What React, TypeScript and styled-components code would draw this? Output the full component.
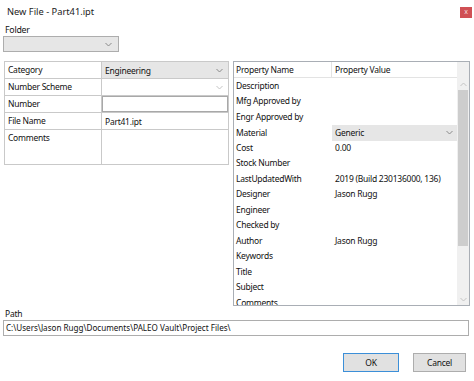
import styled, { createGlobalStyle } from 'styled-components';

const GlobalStyle = createGlobalStyle`
  html, body {
    margin:0;
    padding:0;
    background:#fff;
  }
  body {
    font-family:"Noto Sans", "Open Sans", sans-serif;
    font-size:8.5px;
    letter-spacing:-0.25px;
    color:#111;
  }
`;

const leftRows = [
  { label: 'Category', value: 'Engineering', kind: 'combo' },
  { label: 'Number Scheme', value: '', kind: 'comboOff' },
  { label: 'Number', value: '', kind: 'text' },
  { label: 'File Name', value: 'Part41.ipt', kind: 'plain' },
];

const props: { name: string; value?: string; combo?: boolean }[] = [
  { name: 'Description' },
  { name: 'Mfg Approved by' },
  { name: 'Engr Approved by' },
  { name: 'Material', value: 'Generic', combo: true },
  { name: 'Cost', value: '0.00' },
  { name: 'Stock Number' },
  { name: 'LastUpdatedWith', value: '2019 (Build 230136000, 136)' },
  { name: 'Designer', value: 'Jason Rugg' },
  { name: 'Engineer' },
  { name: 'Checked by' },
  { name: 'Author', value: 'Jason Rugg' },
  { name: 'Keywords' },
  { name: 'Title' },
  { name: 'Subject' },
  { name: 'Comments' },
];

function Chevron({ up, faint }: { up?: boolean; faint?: boolean }) {
  return (
    <svg width="7" height="5" viewBox="0 0 7 5">
      <path
        d={up ? 'M0.5 4 L3.5 1 L6.5 4' : 'M0.5 1 L3.5 4 L6.5 1'}
        fill="none"
        stroke={faint ? '#c4c4c4' : '#8a8a8a'}
        strokeWidth="1"
      />
    </svg>
  );
}

export default function App() {
  return (
    <>
      <GlobalStyle />
      <Window>
        <TitleBar>
          <Title>New File - Part41.ipt</Title>
          <CloseButton>x</CloseButton>
        </TitleBar>

        <Body>
          <Label>Folder</Label>
          <FolderCombo>
            <Chevron />
          </FolderCombo>

          <Main>
            <LeftTable>
              {leftRows.map(r => (
                <Row key={r.label}>
                  <KeyCell>{r.label}</KeyCell>
                  <ValueCell kind={r.kind}>
                    <span>{r.value}</span>
                    {r.kind === 'combo' && <Chevron />}
                    {r.kind === 'comboOff' && <Chevron faint />}
                  </ValueCell>
                </Row>
              ))}
              <Row tall>
                <KeyCell>Comments</KeyCell>
                <ValueCell kind="plain" />
              </Row>
            </LeftTable>

            <PropGrid>
              <GridList>
                <GridHeader>
                  <NameCol>Property Name</NameCol>
                  <ValCol>Property Value</ValCol>
                </GridHeader>
                {props.map(p => (
                  <PropRow key={p.name}>
                    <NameCol>{p.name}</NameCol>
                    {p.combo ? (
                      <ValCombo>
                        <span>{p.value}</span>
                        <Chevron />
                      </ValCombo>
                    ) : (
                      <ValCol>{p.value}</ValCol>
                    )}
                  </PropRow>
                ))}
              </GridList>
              <Scrollbar>
                <ArrowBox>
                  <Chevron up faint />
                </ArrowBox>
                <Thumb />
                <Track />
                <ArrowBox>
                  <Chevron faint />
                </ArrowBox>
              </Scrollbar>
            </PropGrid>
          </Main>

          <PathLabel>Path</PathLabel>
          <PathBox>C:\Users\Jason Rugg\Documents\PALEO Vault\Project Files\</PathBox>

          <ButtonRow>
            <Button primary>OK</Button>
            <Button>Cancel</Button>
          </ButtonRow>
        </Body>
      </Window>
    </>
  );
}

const Window = styled.div`
  width:474px;
  height:381px;
  background:#fff;
  display:flex;
  flex-direction:column;
  overflow:hidden;
`;

const TitleBar = styled.div`
  height:22px;
  display:flex;
  align-items:center;
  justify-content:space-between;
  padding:0 2px 0 7px;
`;

const Title = styled.div`
  font-size:9.3px;
  letter-spacing:0;
  color:#222;
  margin-top:1px;
`;

const CloseButton = styled.div`
  width:12px;
  height:11px;
  background:#d05055;
  color:#f4dcdc;
  font-size:7px;
  line-height:10px;
  text-align:center;
  margin-top:3px;
`;

const Body = styled.div`
  padding:0 4px 0 3px;
  display:flex;
  flex-direction:column;
`;

const Label = styled.div`
  height:14px;
  line-height:16px;
  padding-left:2px;
  font-size:8.8px;
`;

const FolderCombo = styled.div`
  width:116px;
  height:16px;
  background:#e6e6e6;
  border:1px solid #adadad;
  display:flex;
  align-items:center;
  justify-content:flex-end;
  padding-right:6px;
  box-sizing:border-box;
`;

const Main = styled.div`
  display:flex;
  gap:4px;
  margin-top:9px;
  align-items:flex-start;
`;

const LeftTable = styled.div`
  width:225px;
  border:1px solid #c9c9c9;
  border-bottom:none;
  margin-left:1px;
`;

const Row = styled.div<{ tall?: boolean }>`
  display:grid;
  grid-template-columns:97px 1fr;
  height:${p => (p.tall ? '35px' : '17px')};
  border-bottom:1px solid #c9c9c9;
  box-sizing:border-box;
`;

const KeyCell = styled.div`
  padding:0 3px;
  line-height:15px;
  border-right:1px solid #c9c9c9;
`;

const ValueCell = styled.div<{ kind?: string }>`
  display:flex;
  align-items:center;
  justify-content:space-between;
  padding:0 5px 0 3px;
  background:${p => (p.kind === 'combo' ? '#e6e6e6' : '#fff')};
  box-shadow:${p => (p.kind === 'text' ? 'inset 0 0 0 1px #a8a8a8' : 'none')};
  align-self:stretch;
  & span { line-height:15px; }
`;

const PropGrid = styled.div`
  width:239px;
  height:245px;
  border:1px solid #a9aeb5;
  box-sizing:border-box;
  display:flex;
  overflow:hidden;
`;

const GridList = styled.div`
  flex:1;
  overflow:hidden;
`;

const GridHeader = styled.div`
  display:grid;
  grid-template-columns:98px 1fr;
  height:15px;
  line-height:15px;
  border-bottom:1px solid #e3e3e3;
  & > div:first-child { border-right:1px solid #e3e3e3; }
`;

const PropRow = styled.div`
  display:grid;
  grid-template-columns:98px 1fr;
  height:15.5px;
  line-height:14px;
  align-items:center;
`;

const NameCol = styled.div`
  padding-left:2px;
  white-space:nowrap;
`;

const ValCol = styled.div`
  padding-left:3px;
  white-space:nowrap;
`;

const ValCombo = styled.div`
  height:16px;
  background:#e6e6e6;
  display:flex;
  align-items:center;
  justify-content:space-between;
  padding:0 4px 0 3px;
`;

const Scrollbar = styled.div`
  width:12px;
  background:#f0f0f0;
  display:flex;
  flex-direction:column;
  padding-top:16px;
`;

const ArrowBox = styled.div`
  height:12px;
  display:flex;
  align-items:center;
  justify-content:center;
`;

const Thumb = styled.div`
  height:156px;
  margin:0 1px;
  background:#cdcdcd;
`;

const Track = styled.div`
  flex:1;
`;

const PathLabel = styled.div`
  margin-top:2px;
  height:12px;
  line-height:12px;
  padding-left:2px;
`;

const PathBox = styled.div`
  height:16px;
  border:1px solid #adadad;
  box-sizing:border-box;
  line-height:14px;
  padding-left:2px;
  margin-right:1px;
  font-size:8.1px;
  letter-spacing:0;
`;

const ButtonRow = styled.div`
  display:flex;
  justify-content:flex-end;
  gap:14px;
  margin-top:17px;
  padding-right:4px;
`;

const Button = styled.div<{ primary?: boolean }>`
  width:${p => (p.primary ? '56px' : '53px')};
  height:19px;
  box-sizing:border-box;
  background:#e1e1e1;
  border:1px solid ${p => (p.primary ? '#3c8fd8' : '#adadad')};
  display:flex;
  align-items:center;
  justify-content:center;
`;
